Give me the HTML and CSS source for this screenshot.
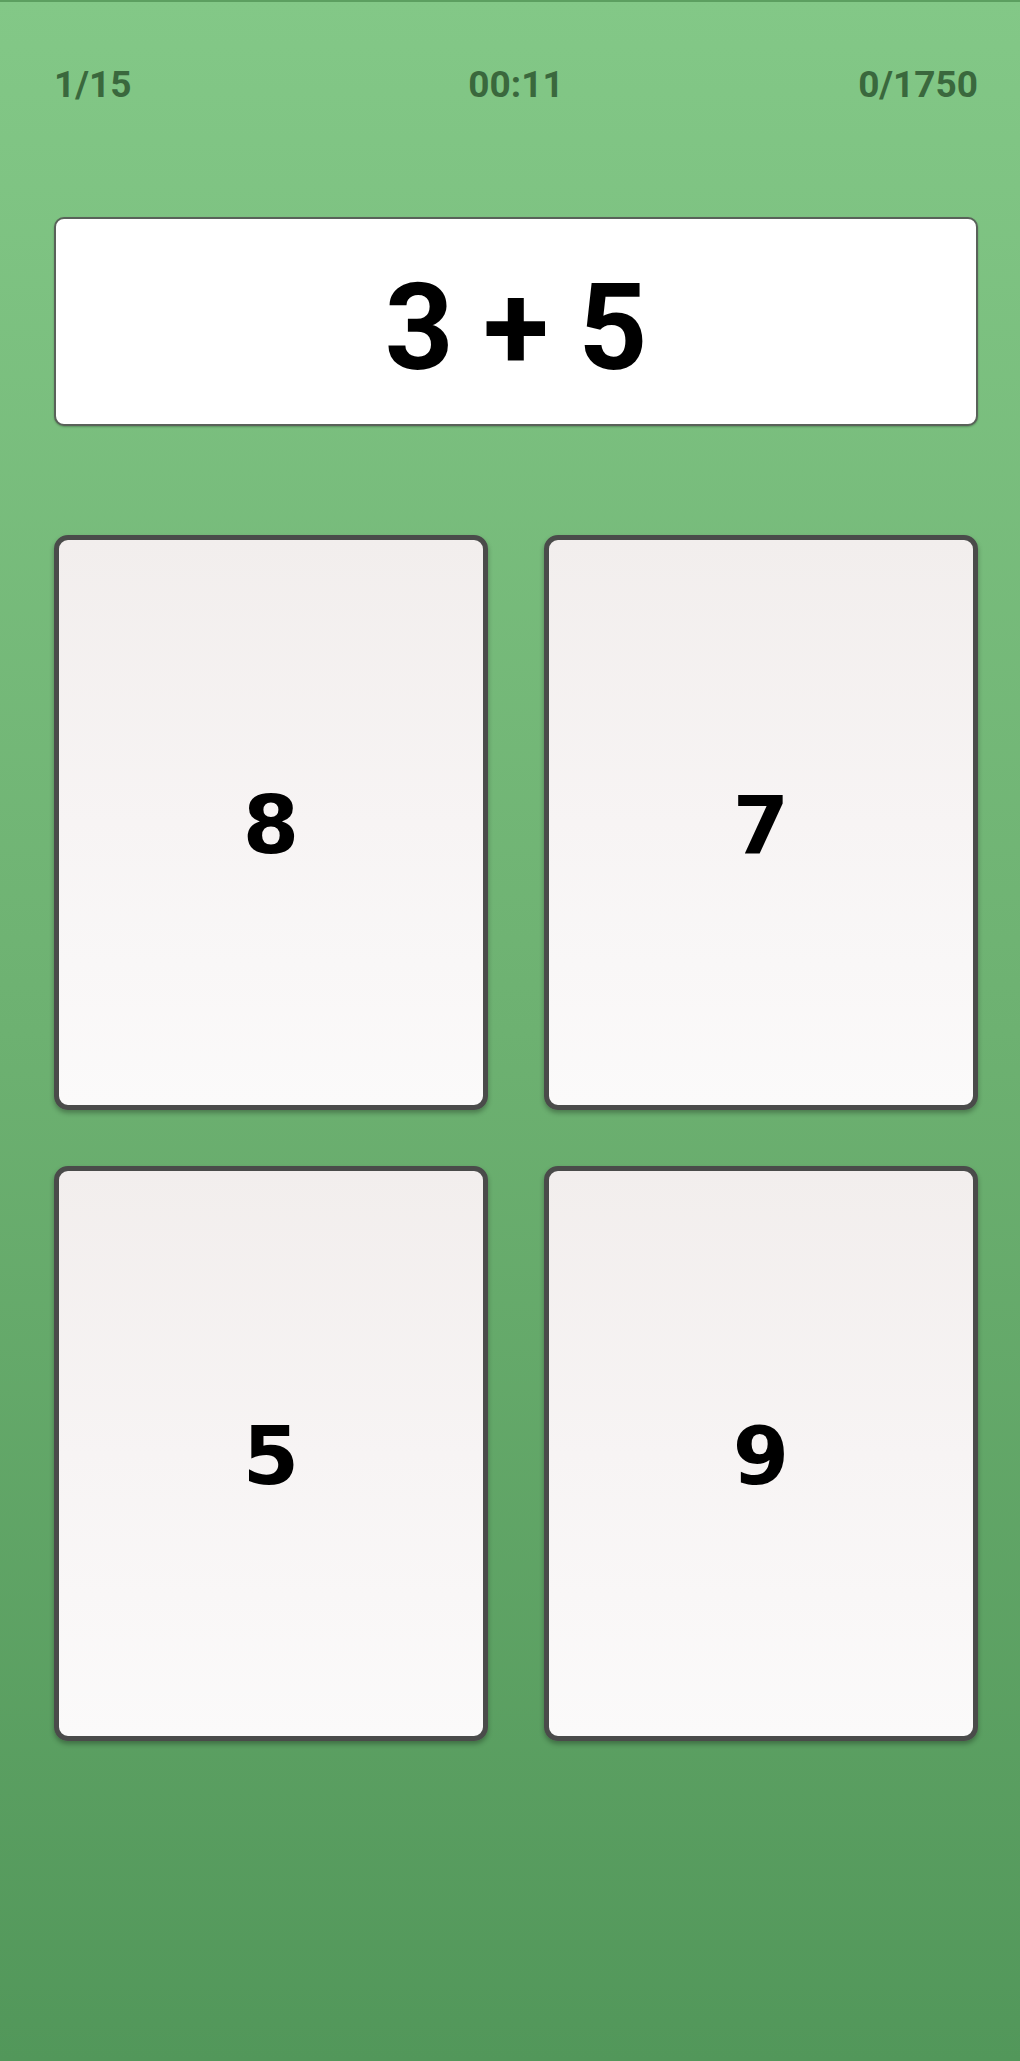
FILE: index.html
```html
<!DOCTYPE html>
<html lang="en">
<head>
<meta charset="utf-8">
<title>Math Cards</title>
<link rel="stylesheet" href="styles.css">
</head>
<body>
<div class="app">
  <header class="status">
    <span class="status-item status-left">1/15</span>
    <span class="status-item status-center">00:11</span>
    <span class="status-item status-right">0/1750</span>
  </header>
  <section class="question">
    <span class="question-text">3 + 5</span>
  </section>
  <section class="answers">
    <button class="card"><span class="card-value">8</span></button>
    <button class="card"><span class="card-value">7</span></button>
    <button class="card"><span class="card-value">5</span></button>
    <button class="card"><span class="card-value">9</span></button>
  </section>
</div>
</body>
</html>
```

FILE: styles.css
```css
html, body {
  margin: 0;
  padding: 0;
}

body {
  width: 1020px;
  min-height: 2061px;
  background: linear-gradient(to bottom, #83c887 0%, #6db171 50%, #52975a 100%);
  border-top: 2px solid #5c9f60;
  box-sizing: border-box;
  font-family: Roboto, "Liberation Sans", sans-serif;
}

.app {
  padding: 61px 42px 0 54px;
  display: flex;
  flex-direction: column;
}

.status {
  display: grid;
  grid-template-columns: 1fr auto 1fr;
  align-items: center;
  height: 44px;
}

.status-item {
  font-family: Roboto, "Liberation Sans", sans-serif;
  font-weight: 700;
  font-size: 37px;
  line-height: 44px;
  color: #3a683d;
}

.status-left {
  justify-self: start;
}

.status-center {
  justify-self: center;
}

.status-right {
  justify-self: end;
}

.question {
  margin-top: 110px;
  height: 209px;
  box-sizing: border-box;
  background: #ffffff;
  border: 2px solid #596259;
  border-radius: 10px;
  box-shadow: 0 1px 2px rgba(0, 0, 0, 0.25);
  display: flex;
  align-items: center;
  justify-content: center;
  padding-top: 13px;
}

.question-text {
  font-family: Roboto, "Liberation Sans", sans-serif;
  font-weight: 700;
  font-size: 120px;
  line-height: 1.172;
  color: #000000;
}

.answers {
  margin-top: 109px;
  display: grid;
  grid-template-columns: 1fr 1fr;
  grid-auto-rows: 575px;
  column-gap: 56px;
  row-gap: 56px;
}

.card {
  margin: 0;
  padding: 5px 0 0 0;
  box-sizing: border-box;
  border: 5px solid #4a4b4a;
  border-radius: 14px;
  background: linear-gradient(to bottom, #f2eeed 0%, #f7f4f4 50%, #fbfafa 100%);
  box-shadow: 0 3px 5px rgba(0, 0, 0, 0.3);
  display: flex;
  align-items: center;
  justify-content: center;
  cursor: pointer;
}

.card-value {
  font-family: "DejaVu Sans", Verdana, sans-serif;
  font-weight: 700;
  font-size: 81px;
  line-height: 1.164;
  color: #000000;
}
```
